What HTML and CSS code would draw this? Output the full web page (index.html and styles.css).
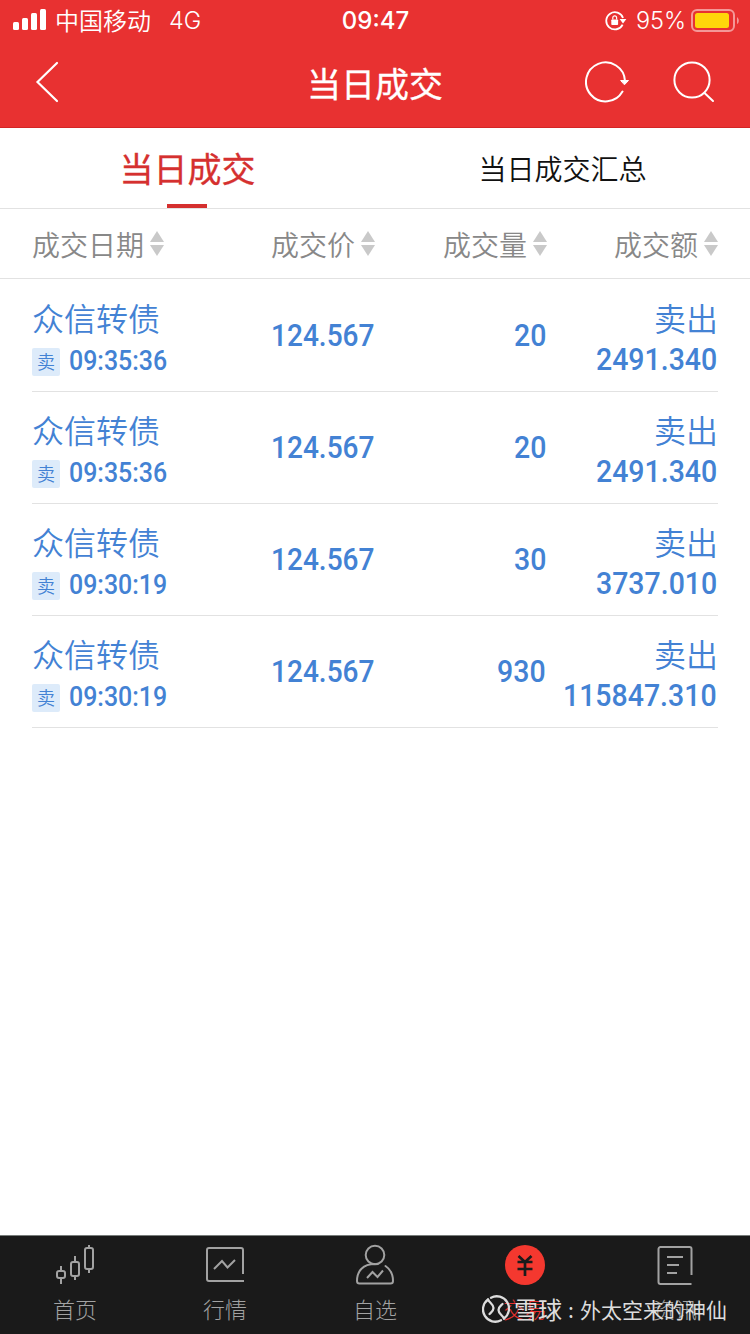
FILE: index.html
```html
<!DOCTYPE html>
<html lang="zh-CN">
<head>
<meta charset="utf-8">
<title>当日成交</title>
<link rel="stylesheet" href="styles.css">
</head>
<body>
<div class="app">
  <header class="top">
    <div class="status">
      <div class="status-left">
        <svg class="signal" width="34" height="22" viewBox="0 0 34 22" fill="#fff"><rect x="0" y="13" width="6" height="8" rx="1.5"/><rect x="9" y="9" width="6" height="12" rx="1.5"/><rect x="18" y="4" width="6" height="17" rx="1.5"/><rect x="27" y="0" width="6" height="21" rx="1.5"/></svg>
        <span class="carrier">中国移动</span>
        <span class="network">4G</span>
      </div>
      <span class="clock">09:47</span>
      <div class="status-right">
        <svg class="lock" width="22" height="20" viewBox="0 0 22 20" fill="none" stroke="#fff" stroke-width="1.8"><path d="M17.600 13.600A8.600 8.600 0 1 1 18 7"/><path d="M14.600 8h6.800L18 12.400z" fill="#fff" stroke="none"/><rect x="6.300" y="8.400" width="6.800" height="5.600" rx=".8" fill="#fff" stroke="none"/><path d="M7.800 8.600V6.800a1.900 1.900 0 0 1 3.800 0v1.800" stroke-width="1.2"/></svg>
        <span class="percent">95%</span>
        <svg class="battery" width="49" height="24" viewBox="0 0 49 24"><rect x="1" y="1" width="42" height="21" rx="5" fill="none" stroke="#fff" stroke-opacity=".5" stroke-width="2"/><rect x="4" y="4" width="34" height="15" rx="2.5" fill="#ffd60a"/><path d="M46 8.200c2.400 1.200 2.400 5.600 0 6.800z" fill="#fff" fill-opacity=".5"/></svg>
      </div>
    </div>
    <div class="nav">
      <svg class="back" width="24" height="42" viewBox="0 0 24 42" fill="none" stroke="#fff" stroke-width="2.2"><path d="M22 2 2.500 21 22 40" stroke-linecap="round"/></svg>
      <h1 class="title">当日成交</h1>
      <div class="actions">
        <svg width="44" height="42" viewBox="0 0 44 42" fill="none" stroke="#fff" stroke-width="2" stroke-linecap="round"><path d="M37.500 30.500A19.500 19.500 0 1 1 40 20"/><path d="M36 19.500h7.500L39.700 23.500z" fill="#fff" stroke-width="1"/></svg>
        <svg width="42" height="42" viewBox="0 0 42 42" fill="none" stroke="#fff" stroke-width="2" stroke-linecap="round"><circle cx="19" cy="19" r="17.600"/><path d="m31.500 32 8.500 8"/></svg>
      </div>
    </div>
  </header>
  <nav class="tabs">
    <div class="tab tab-on"><span>当日成交</span></div>
    <div class="tab tab-off"><span>当日成交汇总</span></div>
  </nav>
  <div class="grid columns">
    <div class="col">成交日期<i class="sort"></i></div>
    <div class="col">成交价<i class="sort"></i></div>
    <div class="col end">成交量<i class="sort"></i></div>
    <div class="col end">成交额<i class="sort"></i></div>
  </div>
  <main class="list">
    <div class="grid row">
      <div><div class="name">众信转债</div><div class="when"><span class="badge">卖</span><span class="num time">09:35:36</span></div></div>
      <div class="mid"><span class="num price">124.567</span></div>
      <div class="mid end"><span class="num num-end">20</span></div>
      <div class="total"><div class="name">卖出</div><span class="num num-end">2491.340</span></div>
    </div>
    <div class="grid row">
      <div><div class="name">众信转债</div><div class="when"><span class="badge">卖</span><span class="num time">09:35:36</span></div></div>
      <div class="mid"><span class="num price">124.567</span></div>
      <div class="mid end"><span class="num num-end">20</span></div>
      <div class="total"><div class="name">卖出</div><span class="num num-end">2491.340</span></div>
    </div>
    <div class="grid row">
      <div><div class="name">众信转债</div><div class="when"><span class="badge">卖</span><span class="num time">09:30:19</span></div></div>
      <div class="mid"><span class="num price">124.567</span></div>
      <div class="mid end"><span class="num num-end">30</span></div>
      <div class="total"><div class="name">卖出</div><span class="num num-end">3737.010</span></div>
    </div>
    <div class="grid row">
      <div><div class="name">众信转债</div><div class="when"><span class="badge">卖</span><span class="num time">09:30:19</span></div></div>
      <div class="mid"><span class="num price">124.567</span></div>
      <div class="mid end"><span class="num num-end">930</span></div>
      <div class="total"><div class="name">卖出</div><span class="num num-end">115847.310</span></div>
    </div>
  </main>
  <footer class="bottom">
    <div class="item">
      <svg width="42" height="42" viewBox="0 0 42 42" fill="none" stroke="#a2a2a2" stroke-width="2"><rect x="3" y="27" width="8" height="7" rx="2"/><path d="M7 22v5M7 34v6"/><rect x="17" y="18" width="8" height="14" rx="2"/><path d="M21 12v6M21 32v4"/><rect x="31" y="4" width="8" height="21" rx="2"/><path d="M35 1v3M35 25v4"/></svg>
      <span>首页</span>
    </div>
    <div class="item">
      <svg width="42" height="42" viewBox="0 0 42 42" fill="none" stroke="#a2a2a2" stroke-width="2"><path d="M39 30V6a2 2 0 0 0-2-2H5a2 2 0 0 0-2 2v29a2 2 0 0 0 2 2h35"/><path d="m10 25 8-8 5.500 6.500L31 16"/></svg>
      <span>行情</span>
    </div>
    <div class="item">
      <svg width="42" height="42" viewBox="0 0 42 42" fill="none" stroke="#a2a2a2" stroke-width="2"><circle cx="21" cy="11" r="9.300"/><path d="M21 20C9 20 3 27 3 37q0 2.500 2.500 2.500h31q2.500 0 2.500-2.500c0-7-3-12-7.500-15" stroke-linecap="round"/><path d="m13 34 5.500-6 5 5 5.500-6.500"/></svg>
      <span>自选</span>
    </div>
    <div class="item item-on">
      <svg width="42" height="42" viewBox="0 0 42 42" fill="none" stroke="#1b1b1b" stroke-width="2.700"><circle cx="21" cy="21" r="20" fill="#f4382f" stroke="none"/><path d="m14.500 12 6.500 6 6.500-6M13.500 18h15M13.500 25h15M21 18v14"/></svg>
      <span>交易</span>
    </div>
    <div class="item">
      <svg width="42" height="42" viewBox="0 0 42 42" fill="none" stroke="#a2a2a2" stroke-width="2"><path d="M37.500 31V5a2 2 0 0 0-2-2h-29a2 2 0 0 0-2 2v33a2 2 0 0 0 2 2h31"/><path d="M13 13h16M13 21h12M13 29h10"/></svg>
      <span>资讯</span>
    </div>
  </footer>
  <div class="watermark">
    <svg width="28" height="28" viewBox="0 0 28 28" fill="none" stroke="#ddd" stroke-width="2.300" stroke-linecap="round"><path d="M6 4.500A12.300 12.300 0 0 0 19 25.300"/><path d="M9 2.700A12.300 12.300 0 0 1 22 23.500"/><path d="M6 4.500c1.500 3.500 5.500 4.500 5.500 8.500 0 3-2 4-4 6"/><path d="M22 23.500c-1.500-3.500-5.500-4.500-5.500-8.500 0-3 2-4 4-6"/></svg>
    <span class="brand">雪球</span><span class="colon">:</span><span>外太空来的神仙</span>
  </div>
</div>
</body>
</html>
```
FILE: styles.css
```css
* { box-sizing: border-box; }
body { margin: 0; background: #fff; font-family: "Noto Sans CJK SC", sans-serif; }
svg { display: block; flex: none; }
.app { position: relative; width: 750px; height: 1334px; display: flex; flex-direction: column; overflow: hidden; }
.top { height: 128px; flex: none; background: #e83131; border-bottom: 1px solid #d32525; color: #fff; }
.status { height: 40px; display: grid; grid-template-columns: 1fr auto 1fr; align-items: center; padding: 0 10px 0 13px; line-height: 40px; }
.status-left, .status-right { display: flex; align-items: center; height: 40px; }
.signal { margin-bottom: 2px; }
.carrier { font-size: 24px; font-weight: 350; line-height: 38px; margin: 0 0 2px 8px; }
.network { font: 300 23.500px/40px Inter, sans-serif; margin-left: 18px; padding-top: 1px; }
.status-right { justify-content: flex-end; }
.lock { margin-right: -1px; }
.clock { font: 500 24px/40px Inter, sans-serif; padding: 1px 2px 0 0; }
.percent { font: 300 23.500px/40px Inter, sans-serif; margin: 0 5px 0 10px; padding-top: 1px; }
.nav { height: 86px; display: grid; grid-template-columns: 1fr auto 1fr; align-items: center; padding: 0 35px; }
.back, .actions { margin-bottom: 2px; }
.title { margin: 0; font-size: 34px; font-weight: 400; -webkit-text-stroke: .3px currentColor; line-height: 86px; }
.actions { display: flex; gap: 44px; justify-content: flex-end; }
.tabs { height: 81px; flex: none; display: flex; padding-right: 1px; border-bottom: 1px solid #e2e2e2; }
.tab { flex: 1; display: flex; flex-direction: column; align-items: center; font-size: 28px; font-weight: 350; line-height: 80px; color: #111; }
.tab span { height: 80px; }
.tab-off { padding-left: 3px; }
.tab-on { font-size: 34px; font-weight: 400; -webkit-text-stroke: .3px currentColor; color: #d5302f; }
.tab-on span { line-height: 79px; padding-left: 2px; }
.tab-on::after { content: ""; width: 40px; height: 4px; margin-top: -4px; background: #d5302f; }
.grid { display: grid; grid-template-columns: 239px 105px 171px 171px; margin: 0 32px; }
.columns { height: 70px; flex: none; margin: 0; padding: 0 32px; border-bottom: 1px solid #e2e2e2; }
.col { display: flex; align-items: center; white-space: nowrap; font-size: 28px; font-weight: 350; color: #888; }
.end { justify-content: flex-end; }
.sort { display: flex; flex-direction: column; gap: 3px; margin-left: 6px; }
.sort::before, .sort::after { content: ""; border: 0 solid transparent; border-width: 0 7px; }
.sort::before { border-bottom: 11px solid #c9c9c9; }
.sort::after { border-top: 11px solid #c9c9c9; }
.list { flex: 1; padding-top: 1px; color: #4382d4; }
.row { height: 112px; border-bottom: 1px solid #e2e2e2; }
.name { height: 59px; padding-top: 14px; font-size: 32px; font-weight: 350; line-height: 46px; }
.when { display: flex; align-items: center; height: 40px; gap: 9px; }
.badge { width: 28px; height: 28px; margin-top: 6px; border-radius: 2px; background: #ddebfa; font-size: 18px; font-weight: 350; line-height: 27px; text-align: center; }
.num { display: inline-block; font: 500 32px/40px Roboto, sans-serif; transform: scaleX(.89); transform-origin: left center; }
.num-end { margin-right: 1px; transform-origin: right center; }
.price { transform: scaleX(.877); }
.time { margin-top: 3px; font-size: 28px; transform: scaleX(.89); }
.mid { display: flex; align-items: center; padding-bottom: 2px; }
.total { display: flex; flex-direction: column; align-items: flex-end; }
.bottom { height: 99px; flex: none; display: flex; background: #1a1a1a; border-top: 1px solid #777c7a; }
.item { flex: 1; display: flex; flex-direction: column; align-items: center; padding-top: 8px; font-size: 22px; font-weight: 300; line-height: 32px; gap: 6px; color: #a2a2a2; }
.item-on { color: #e83131; }
.watermark { position: absolute; left: 482px; top: 1294px; display: flex; align-items: center; height: 30px; font-size: 21px; line-height: 28px; color: #ddd; white-space: nowrap; }
.brand { font-size: 24px; margin-left: 4px; }
.colon { width: 18px; text-align: center; }
```
